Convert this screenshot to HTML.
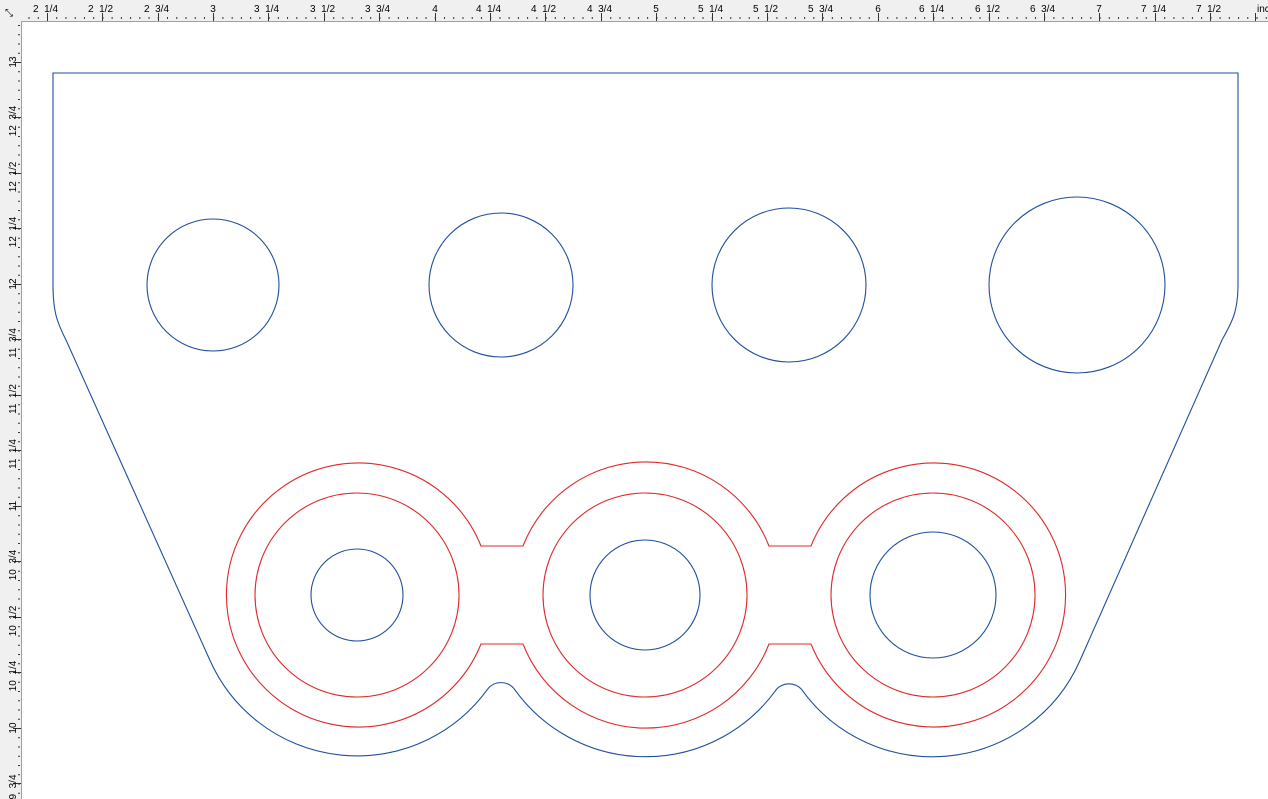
<!DOCTYPE html>
<html><head><meta charset="utf-8"><style>
html,body{margin:0;padding:0;background:#fff;}
svg{display:block;}
text{font-family:"Liberation Sans",Arial,sans-serif;font-size:10px;fill:#000;white-space:pre;}
</style></head><body>
<svg width="1268" height="799" viewBox="0 0 1268 799" xmlns="http://www.w3.org/2000/svg" xml:space="preserve">
<defs>
<pattern id="tt" x="47" y="0" width="9.233" height="21" patternUnits="userSpaceOnUse">
<rect x="0" y="17" width="1" height="2" fill="#333"/>
</pattern>
<pattern id="lt" x="0" y="62" width="21" height="9.25" patternUnits="userSpaceOnUse">
<rect x="18" y="0" width="2" height="1" fill="#333"/>
</pattern>
</defs>
<rect x="0" y="0" width="1268" height="799" fill="#fff"/>
<rect x="0" y="0" width="1268" height="21" fill="#f0f0f0"/>
<rect x="22" y="0" width="1246" height="21" fill="url(#tt)"/>
<rect x="0" y="21" width="1268" height="1" fill="#a0a0a0"/>
<rect x="0" y="0" width="21" height="799" fill="#f0f0f0"/>
<rect x="0" y="22" width="21" height="777" fill="url(#lt)"/>
<rect x="21" y="21" width="1" height="778" fill="#a0a0a0"/>
<rect x="0" y="0" width="21" height="21" fill="#f0f0f0"/>
<text x="5" y="16" font-size="9">⤡</text>
<g fill="#333">
<rect x="47" y="13" width="1" height="8"/><rect x="102" y="13" width="1" height="8"/><rect x="158" y="13" width="1" height="8"/><rect x="213" y="13" width="1" height="8"/>
<rect x="268" y="13" width="1" height="8"/><rect x="324" y="13" width="1" height="8"/><rect x="379" y="13" width="1" height="8"/><rect x="435" y="13" width="1" height="8"/>
<rect x="490" y="13" width="1" height="8"/><rect x="545" y="13" width="1" height="8"/><rect x="601" y="13" width="1" height="8"/><rect x="656" y="13" width="1" height="8"/>
<rect x="712" y="13" width="1" height="8"/><rect x="767" y="13" width="1" height="8"/><rect x="822" y="13" width="1" height="8"/><rect x="878" y="13" width="1" height="8"/>
<rect x="933" y="13" width="1" height="8"/><rect x="989" y="13" width="1" height="8"/><rect x="1044" y="13" width="1" height="8"/><rect x="1099" y="13" width="1" height="8"/>
<rect x="1155" y="13" width="1" height="8"/><rect x="1210" y="13" width="1" height="8"/><rect x="1255" y="13" width="1" height="8"/>
<rect x="13" y="62" width="8" height="1"/><rect x="13" y="117" width="8" height="1"/><rect x="13" y="173" width="8" height="1"/><rect x="13" y="228" width="8" height="1"/>
<rect x="13" y="284" width="8" height="1"/><rect x="13" y="339" width="8" height="1"/><rect x="13" y="395" width="8" height="1"/><rect x="13" y="450" width="8" height="1"/>
<rect x="13" y="506" width="8" height="1"/><rect x="13" y="561" width="8" height="1"/><rect x="13" y="617" width="8" height="1"/><rect x="13" y="672" width="8" height="1"/>
<rect x="13" y="728" width="8" height="1"/><rect x="13" y="783" width="8" height="1"/>
</g>
<g>
<text x="33" y="12">2  1/4</text><text x="88" y="12">2  1/2</text><text x="144" y="12">2  3/4</text><text x="213" y="12" text-anchor="middle">3</text>
<text x="254" y="12">3  1/4</text><text x="310" y="12">3  1/2</text><text x="365" y="12">3  3/4</text><text x="435" y="12" text-anchor="middle">4</text>
<text x="476" y="12">4  1/4</text><text x="531" y="12">4  1/2</text><text x="587" y="12">4  3/4</text><text x="656" y="12" text-anchor="middle">5</text>
<text x="698" y="12">5  1/4</text><text x="753" y="12">5  1/2</text><text x="808" y="12">5  3/4</text><text x="878" y="12" text-anchor="middle">6</text>
<text x="919" y="12">6  1/4</text><text x="975" y="12">6  1/2</text><text x="1030" y="12">6  3/4</text><text x="1099" y="12" text-anchor="middle">7</text>
<text x="1141" y="12">7  1/4</text><text x="1196" y="12">7  1/2</text><text x="1257" y="12">inc</text>
</g>
<g>
<text transform="translate(16,62) rotate(-90)" text-anchor="middle">13</text>
<text transform="translate(16,121) rotate(-90)" text-anchor="middle">12  3/4</text>
<text transform="translate(16,177) rotate(-90)" text-anchor="middle">12  1/2</text>
<text transform="translate(16,232) rotate(-90)" text-anchor="middle">12  1/4</text>
<text transform="translate(16,284) rotate(-90)" text-anchor="middle">12</text>
<text transform="translate(16,343) rotate(-90)" text-anchor="middle">11  3/4</text>
<text transform="translate(16,399) rotate(-90)" text-anchor="middle">11  1/2</text>
<text transform="translate(16,454) rotate(-90)" text-anchor="middle">11  1/4</text>
<text transform="translate(16,506) rotate(-90)" text-anchor="middle">11</text>
<text transform="translate(16,565) rotate(-90)" text-anchor="middle">10  3/4</text>
<text transform="translate(16,621) rotate(-90)" text-anchor="middle">10  1/2</text>
<text transform="translate(16,676) rotate(-90)" text-anchor="middle">10  1/4</text>
<text transform="translate(16,728) rotate(-90)" text-anchor="middle">10</text>
<text transform="translate(16,787) rotate(-90)" text-anchor="middle">9  3/4</text>
</g>
<path fill="none" stroke="#1f4f9c" stroke-width="1.1" d="M53,73 L1238,73 L1238,284 C1238,312 1232,322 1222,340 L1079.8,660.9 A161,161 0 0 1 801.5,689.3 A17,17 0 0 0 776.5,689.3 A161,161 0 0 1 514.5,689.3 A17,17 0 0 0 487.5,689.3 A161,161 0 0 1 210.2,660.9 L66,340 C57,322 53,312 53,284 Z"/>
<g fill="none" stroke="#1f4f9c" stroke-width="1.1">
<circle cx="213" cy="285" r="66"/>
<circle cx="501" cy="285" r="72"/>
<circle cx="789" cy="285" r="77"/>
<circle cx="1077" cy="285" r="88"/>
<circle cx="357" cy="595" r="46"/>
<circle cx="645" cy="595" r="55"/>
<circle cx="933" cy="595" r="63"/>
</g>
<g fill="none" stroke="#e0282a" stroke-width="1.1">
<circle cx="357" cy="595" r="102"/>
<circle cx="645" cy="595" r="102"/>
<circle cx="933" cy="595" r="102"/>
<path d="M481,546 L523,546 A132,132 0 0 1 769,546 L811,546 A132,132 0 1 1 811,644 L769,644 A132,132 0 0 1 523,644 L481,644 A132,132 0 1 1 481,546 Z"/>
</g>
</svg>
</body></html>
